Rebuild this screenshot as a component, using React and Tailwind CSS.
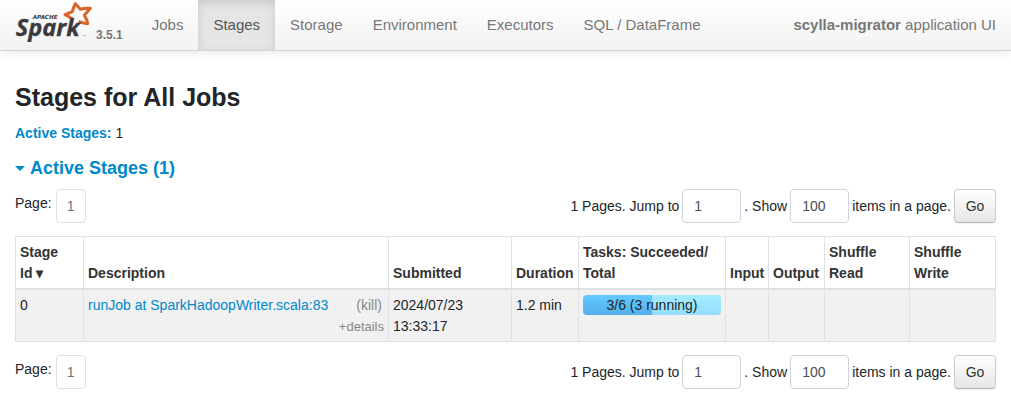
import { useState } from "react";

const tabs = ["Jobs", "Stages", "Storage", "Environment", "Executors", "SQL / DataFrame"];

const columns = [
  { label: "Stage Id\u00a0▾", width: "w-[68px]" },
  { label: "Description", width: "" },
  { label: "Submitted", width: "w-[123px]" },
  { label: "Duration", width: "w-[67px]" },
  { label: "Tasks: Succeeded/ Total", width: "w-[147px]" },
  { label: "Input", width: "w-[43px]" },
  { label: "Output", width: "w-[56px]" },
  { label: "Shuffle Read", width: "w-[85px]" },
  { label: "Shuffle Write", width: "w-[86px]" },
];

const stages = [
  {
    id: 0,
    description: "runJob at SparkHadoopWriter.scala:83",
    submitted: "2024/07/23 13:33:17",
    duration: "1.2 min",
    succeeded: 3,
    running: 3,
    total: 6,
  },
];

function SparkLogo() {
  return (
    <svg width="78" height="42" viewBox="42 0 234 126" role="img" aria-label="Apache Spark">
      <path
        d="M233 64 Q247 70 260 71 Q258 57 250 46 L268 25 Q252 23 238 28 L223 11 Q217 22 214 35 L192 44 Q203 49 211 55 L212 66"
        fill="none"
        stroke="#dc6428"
        strokeWidth="9"
        strokeLinejoin="round"
      />
      <text
        x="44"
        y="108"
        fontSize="71"
        fill="#3c3a3e"
        stroke="#3c3a3e"
        strokeWidth="1"
        className="font-['Open_Sans',sans-serif] font-bold italic"
      >
        Spark
      </text>
      <text
        x="95"
        y="58"
        fontSize="17"
        fill="#3c3a3e"
        className="font-['DejaVu_Sans',sans-serif] font-bold italic"
      >
        APACHE
      </text>
      <text x="246" y="108" fontSize="6" fill="#3c3a3e">
        TM
      </text>
    </svg>
  );
}

function Navbar() {
  return (
    <header className="flex justify-between border-b border-[#d4d4d4] bg-linear-to-b from-white to-[#f2f2f2] px-[15px] shadow-[0_1px_10px_rgba(0,0,0,0.1)]">
      <div className="flex">
        <a href="#" className="mr-[14px] flex items-start gap-[3px]">
          <SparkLogo />
          <span className="pt-[25px] text-xs leading-5 font-bold text-[#777]">3.5.1</span>
        </a>
        <nav className="flex text-[15px] leading-5">
          {tabs.map((tab) => (
            <a
              key={tab}
              href="#"
              className={
                tab === "Stages"
                  ? "bg-[#e5e5e5] p-[15px] text-[#555] shadow-[inset_0_3px_8px_rgba(0,0,0,0.125)]"
                  : "p-[15px] text-[#777]"
              }
            >
              {tab}
            </a>
          ))}
        </nav>
      </div>
      <p className="py-[15px] text-[15px] leading-5 text-[#777]">
        <strong>scylla-migrator</strong> application UI
      </p>
    </header>
  );
}

function Pagination({ name }) {
  const [page, setPage] = useState("1");
  const [size, setSize] = useState("100");

  const inputClass =
    "h-[34px] w-[59px] rounded border border-[#ced4da] bg-white px-[11px] text-[#495057]";

  return (
    <div className="flex items-start justify-between">
      <div className="flex items-start gap-1">
        <span className="pt-1">Page:</span>
        <a
          href="#"
          className="flex h-[34px] w-[30px] items-center justify-center rounded border border-[#dee2e6] text-[#6c757d]"
        >
          1
        </a>
      </div>
      <form className="flex items-center gap-[3px]" onSubmit={(e) => e.preventDefault()}>
        <label htmlFor={`${name}-page`}>1 Pages. Jump to</label>
        <input
          id={`${name}-page`}
          type="text"
          className={inputClass}
          value={page}
          onChange={(e) => setPage(e.target.value)}
        />
        <label htmlFor={`${name}-size`}>. Show</label>
        <input
          id={`${name}-size`}
          type="text"
          className={inputClass}
          value={size}
          onChange={(e) => setSize(e.target.value)}
        />
        <span>items in a page.</span>
        <button
          type="submit"
          className="h-[34px] w-[42px] rounded border border-[#ccc] border-b-[#b3b3b3] bg-linear-to-b from-white to-[#e6e6e6] text-[#333] shadow-[0_1px_2px_rgba(0,0,0,0.05)]"
        >
          Go
        </button>
      </form>
    </div>
  );
}

function TaskProgress({ stage }) {
  const { succeeded, running, total } = stage;
  return (
    <div className="relative flex h-5 overflow-hidden rounded">
      <div
        className="bg-linear-to-b from-[#64caff] to-[#54aeec]"
        style={{ width: `${(succeeded / total) * 100}%` }}
      />
      <div
        className="bg-linear-to-b from-[#a4edff] to-[#94ddff]"
        style={{ width: `${(running / total) * 100}%` }}
      />
      <span className="absolute inset-0 text-center">
        {succeeded}/{total} ({running} running)
      </span>
    </div>
  );
}

function StageTable() {
  return (
    <table className="my-[13px] w-full table-fixed border-collapse">
      <thead>
        <tr>
          {columns.map((col) => (
            <th
              key={col.label}
              className={`${col.width} border border-b-2 border-[#dee2e6] px-1 pt-[5px] pb-1 text-left align-bottom font-bold text-[#333]`}
            >
              {col.label}
            </th>
          ))}
        </tr>
      </thead>
      <tbody>
        {stages.map((stage) => (
          <tr
            key={stage.id}
            className="bg-[#f1f1f1] align-top *:border *:border-[#dee2e6] *:px-1 *:pt-[5px] *:pb-1"
          >
            <td>{stage.id}</td>
            <td>
              <div className="flex justify-between">
                <a href="#" className="text-[#0088cc]">
                  {stage.description}
                </a>
                <a href="#" className="mr-[2px] text-[#888]">
                  (kill)
                </a>
              </div>
              <button type="button" className="block w-full text-right text-[13px] leading-[21px] text-[#888]">
                +details
              </button>
            </td>
            <td>{stage.submitted}</td>
            <td>{stage.duration}</td>
            <td>
              <TaskProgress stage={stage} />
            </td>
            <td></td>
            <td></td>
            <td></td>
            <td></td>
          </tr>
        ))}
      </tbody>
    </table>
  );
}

export default function App() {
  return (
    <div className="min-h-screen bg-white font-['Liberation_Sans',Arial,sans-serif] text-sm leading-[21px] text-[#212529]">
      <Navbar />
      <main className="px-[15px] pt-8 pb-4">
        <h3 className="text-[25px] leading-[29px] font-bold">Stages for All Jobs</h3>
        <p className="mt-[11px]">
          <a href="#" className="font-bold text-[#0088cc]">
            Active Stages:
          </a>{" "}
          1
        </p>
        <h4 className="mt-[13px] mb-[10px] text-lg leading-[22px] font-bold text-[#0088cc]">
          <a href="#" className="flex items-center gap-[5px]">
            <svg width="10" height="5" viewBox="0 0 10 5" aria-hidden="true">
              <path d="M0 0h10L5 5z" fill="currentColor" />
            </svg>
            Active Stages (1)
          </a>
        </h4>
        <Pagination name="top" />
        <StageTable />
        <Pagination name="bottom" />
      </main>
    </div>
  );
}
